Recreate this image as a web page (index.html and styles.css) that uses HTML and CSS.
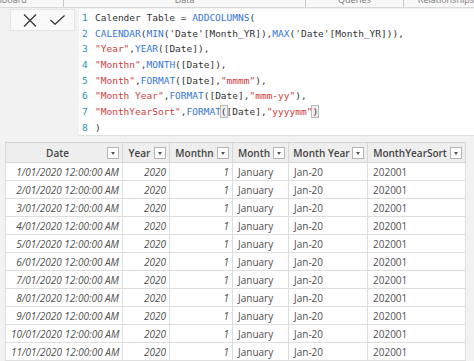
FILE: index.html
```html
<!DOCTYPE html>
<html lang="en">
<head>
    <meta charset="UTF-8">
    <title>Calender Table</title>
    <link rel="stylesheet" href="styles.css">
</head>
<body>
    <div class="ribbon">
        <div class="group g-clip"><span>Clipboard</span></div>
        <div class="group g-data"><span>Data</span></div>
        <div class="group g-queries"><span>Queries</span></div>
        <div class="group g-rel"><span>Relationships</span></div>
    </div>

    <div class="formula">
        <div class="buttons">
            <svg width="14" height="13" viewBox="0 0 14 13"><path d="M1 0.5L13 12.5M13 0.5L1 12.5" stroke="#333" stroke-width="1.2" fill="none"/></svg>
            <svg width="15" height="10" viewBox="0 0 15 10"><path d="M0.5 5L5 9.3L14.5 0.5" stroke="#333" stroke-width="1.2" fill="none"/></svg>
        </div>
        <div class="editor">
            <div class="line"><span class="ln">1</span>Calender Table = <span class="fn">ADDCOLUMNS</span>(</div>
            <div class="line"><span class="ln">2</span><span class="fn">CALENDAR</span>(<span class="fn">MIN</span>('Date'[Month_YR]),<span class="fn">MAX</span>('Date'[Month_YR])),</div>
            <div class="line"><span class="ln">3</span><span class="str">"Year"</span>,<span class="fn">YEAR</span>([Date]),</div>
            <div class="line"><span class="ln">4</span><span class="str">"Monthn"</span>,<span class="fn">MONTH</span>([Date]),</div>
            <div class="line"><span class="ln">5</span><span class="str">"Month"</span>,<span class="fn">FORMAT</span>([Date],<span class="str">"mmmm"</span>),</div>
            <div class="line"><span class="ln">6</span><span class="str">"Month Year"</span>,<span class="fn">FORMAT</span>([Date],<span class="str">"mmm-yy"</span>),</div>
            <div class="line"><span class="ln">7</span><span class="str">"MonthYearSort"</span>,<span class="fn">FORMAT</span><span class="match">(</span>[Date],<span class="str">"yyyymm"</span><span class="match">)</span></div>
            <div class="line"><span class="ln">8</span>)</div>
        </div>
    </div>

    <table class="grid">
        <thead>
            <tr>
                <th class="c-date"><div class="head"><span>Date</span><i class="drop"></i></div></th>
                <th class="c-year"><div class="head"><span>Year</span><i class="drop"></i></div></th>
                <th class="c-monthn"><div class="head"><span>Monthn</span><i class="drop"></i></div></th>
                <th class="c-month"><div class="head"><span>Month</span><i class="drop"></i></div></th>
                <th class="c-my"><div class="head"><span>Month Year</span><i class="drop"></i></div></th>
                <th class="c-mys"><div class="head"><span>MonthYearSort</span><i class="drop"></i></div></th>
            </tr>
        </thead>
        <tbody id="rows"></tbody>
    </table>

    <script>
        // fill the grid with one row per day
        const rows = document.getElementById("rows");
        for (let d = 1; d <= 11; d++) {
            rows.innerHTML += `<tr>
                <td class="num">${d}/01/2020 12:00:00 AM</td>
                <td class="num">2020</td>
                <td class="num">1</td>
                <td>January</td>
                <td>Jan-20</td>
                <td>202001</td>
            </tr>`;
        }
    </script>
</body>
</html>
```

FILE: styles.css
```css
*{
    margin: 0px;
    padding: 0px;
    box-sizing: border-box;
}
body{
    background: #f2f2f2;
    font-family: "Open Sans", "Noto Sans", sans-serif;
    overflow: hidden;
}
.ribbon{
    display: flex;
    height: 8px;
    background: #f8f8f8;
    border-bottom: 1px solid #d9d9d9;
    overflow: hidden;
}
.group{
    height: 7px;
    border-right: 1px solid #c9c9c9;
    text-align: center;
    font-size: 9px;
    line-height: 9px;
    color: #777;
}
.group span{
    display: block;
    margin-top: -5px;
}
.g-clip{
    width: 66px;
    text-align: left;
}
.g-clip span{
    margin-left: -14px;
}
.g-data{
    width: 251px;
}
.g-queries{
    width: 101px;
}
.g-rel{
    flex: 1;
    border-right: none;
    text-align: left;
    padding-left: 14px;
}
.formula{
    display: flex;
    gap: 4px;
    padding: 1px 0px 0px 10px;
}
.buttons{
    width: 65px;
    height: 22px;
    background: #f9f9f9;
    border: 1px solid #e4e4e4;
    display: flex;
    align-items: center;
    gap: 13px;
    padding-left: 12px;
}
.editor{
    flex: 1;
    height: 127px;
    background: #fff;
    border-bottom: 1px solid #e0e0e0;
    padding-top: 1px;
    font-family: "DejaVu Sans Mono", "Liberation Mono", monospace;
    font-size: 9.5px;
    line-height: 15.7px;
    color: #333;
}
.line{
    white-space: pre;
    height: 15.7px;
}
.ln{
    display: inline-block;
    width: 16px;
    padding-left: 3px;
    color: #2b91af;
}
.fn{
    color: #3575d6;
}
.str{
    color: #cc3d3d;
}
.match{
    outline: 1px solid #b8b8b8;
    background: #f0f0f0;
}
.grid{
    margin: 6px 0px 0px 5px;
    border-collapse: collapse;
    table-layout: fixed;
    width: 460px;
    background: #fff;
    font-size: 10px;
    color: #505050;
}
.c-date{ width: 117px; }
.c-year{ width: 47px; }
.c-monthn{ width: 63px; }
.c-month{ width: 56px; }
.c-my{ width: 79px; }
.c-mys{ width: 98px; }
.grid th{
    background: #eeeeee;
    height: 20px;
    border: 1px solid #d6d6d6;
    font-weight: 600;
    color: #454545;
    padding: 0px 3px 0px 2px;
}
.head{
    display: flex;
    align-items: center;
}
.head span{
    flex: 1;
    text-align: center;
    white-space: nowrap;
}
.drop{
    flex: none;
    width: 12px;
    height: 12px;
    border: 1px solid #b5b5b5;
    background: #fff;
    position: relative;
}
.drop::after{
    content: "";
    position: absolute;
    left: 3px;
    top: 4px;
    border-left: 2.5px solid transparent;
    border-right: 2.5px solid transparent;
    border-top: 3px solid #555;
}
.grid td{
    height: 18px;
    border: 1px solid #dedede;
    padding: 0px 5px;
    white-space: nowrap;
    overflow: hidden;
}
.grid td.num{
    text-align: right;
    font-style: italic;
    padding-right: 3px;
}
```
